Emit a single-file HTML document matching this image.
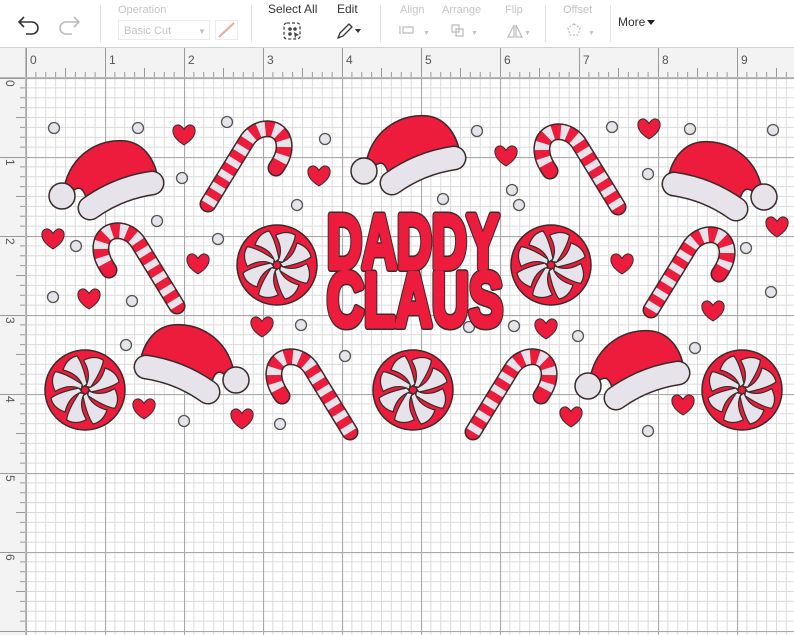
<!DOCTYPE html>
<html><head><meta charset="utf-8"><style>
html,body{margin:0;padding:0;width:794px;height:635px;overflow:hidden;background:#fff;font-family:"Liberation Sans",sans-serif}
</style></head><body>
<svg width="794" height="635" viewBox="0 0 794 635" xmlns="http://www.w3.org/2000/svg" style="position:absolute;left:0;top:0">
<defs>
<pattern id="grid" x="26" y="78" width="79" height="79" patternUnits="userSpaceOnUse">
<rect width="79" height="79" fill="#fff"/>
<g stroke="#dcdcdc" stroke-width="1">
<path d="M9.875,0V79M19.75,0V79M29.625,0V79M39.5,0V79M49.375,0V79M59.25,0V79M69.125,0V79"/>
<path d="M0,9.875H79M0,19.75H79M0,29.625H79M0,39.5H79M0,49.375H79M0,59.25H79M0,69.125H79"/>
</g>
<path d="M0.5,0V79M0,0.5H79" stroke="#a9a9a9" stroke-width="1.2"/>
</pattern>
<pattern id="tick" x="26" y="48" width="79" height="30" patternUnits="userSpaceOnUse">
<path d="M0.5,0V30M9.875,24V30M19.75,24V30M29.625,24V30M39.5,20V30M49.375,24V30M59.25,24V30M69.125,24V30" stroke="#999" stroke-width="1"/>
</pattern>
<pattern id="vtick" x="0" y="78" width="26" height="79" patternUnits="userSpaceOnUse">
<path d="M0,0.5H26M20,9.875H26M20,19.75H26M20,29.625H26M16,39.5H26M20,49.375H26M20,59.25H26M20,69.125H26" stroke="#999" stroke-width="1"/>
</pattern>
<symbol id="hat" overflow="visible">
<path d="M18,50 C25,15 55,0 80,3 C100,6 110,25 112,42 L42,68 C40,56 36,46 28,52 Z" fill="#ee1c3c" stroke="#3a2a2a" stroke-width="1.5"/>
<path d="M44,70 Q72,50 106,45" fill="none" stroke="#3a2a2a" stroke-width="25" stroke-linecap="round"/>
<path d="M44,70 Q72,50 106,45" fill="none" stroke="#e6e4ea" stroke-width="22" stroke-linecap="round"/>
<circle cx="16" cy="58" r="13" fill="#e6e4ea" stroke="#3a2a2a" stroke-width="1.5"/>
</symbol>
<symbol id="cane" overflow="visible">
<path d="M8,82 L46,20 C56,2 82,2 84,22 C85,32 80,40 76,46" fill="none" stroke="#3a2a2a" stroke-width="17" stroke-linecap="round"/>
<path d="M8,82 L46,20 C56,2 82,2 84,22 C85,32 80,40 76,46" fill="none" stroke="#ee1c3c" stroke-width="14" stroke-linecap="round"/>
<path d="M8,82 L46,20 C56,2 82,2 84,22 C85,32 80,40 76,46" fill="none" stroke="#e6e4ea" stroke-width="14" stroke-dasharray="7 8"/>
</symbol>
<g id="blade"><path d="M3,-2 Q16,-6 20,-22 Q32,-18 34,-8 Q26,-2 6,2 Z" fill="#e6e4ea" stroke="#3a2a2a" stroke-width="1.2"/></g>
<symbol id="mint" overflow="visible">
<circle r="40" fill="#ee1c3c" stroke="#3a2a2a" stroke-width="1.5"/>
<use href="#blade"/><use href="#blade" transform="rotate(45)"/><use href="#blade" transform="rotate(90)"/><use href="#blade" transform="rotate(135)"/><use href="#blade" transform="rotate(180)"/><use href="#blade" transform="rotate(225)"/><use href="#blade" transform="rotate(270)"/><use href="#blade" transform="rotate(315)"/>
</symbol>
<symbol id="heart" overflow="visible">
<path d="M0,8 C-16,-2 -12,-13 -5,-12 C-2,-11 0,-8 0,-7 C0,-8 2,-11 5,-12 C12,-13 16,-2 0,8 Z" fill="#ee1c3c" stroke="#3a2a2a" stroke-width="1"/>
</symbol>
</defs>

<rect x="0" y="0" width="794" height="48" fill="#fff"/>
<path d="M20,22 h12 a6,6 0 0 1 0,12 h-6 M24,17 l-5,5 l5,5" fill="none" stroke="#333" stroke-width="1.6"/>
<path d="M78,22 h-12 a6,6 0 0 0 0,12 h6 M74,17 l5,5 l-5,5" fill="none" stroke="#bbb" stroke-width="1.6"/>
<g stroke="#e4e4e4"><path d="M100.5,5V42M251.5,5V42M380.5,5V42M545.5,5V42M610.5,5V42"/></g>
<g font-size="11" fill="#c4c4c4">
<text x="118" y="13">Operation</text>
<rect x="118.5" y="20.5" width="91" height="19" fill="#fff" stroke="#ececec"/>
<text x="124" y="34">Basic Cut</text><text x="198" y="34" font-size="8">▼</text>
<rect x="215.5" y="20.5" width="22" height="19" fill="#fff" stroke="#ececec"/>
<text x="400" y="13">Align</text><text x="442" y="13">Arrange</text><text x="505" y="13">Flip</text><text x="563" y="13">Offset</text>
<text x="423" y="35" font-size="7">▼</text><text x="471" y="35" font-size="7">▼</text><text x="524" y="35" font-size="7">▼</text><text x="588" y="35" font-size="7">▼</text>
</g>
<path d="M219,37 L234,23" stroke="#f0a898" stroke-width="2.2"/>
<g fill="none" stroke="#bbb" stroke-width="1.2">
<path d="M400,26v8M403,27h10v6h-10z"/>
<path d="M452,25h7v7h-7zM456,29h7v7h-7z"/>
<path d="M514,37l-6,0l6-12zM516,37l6,0l-6-12z"/>
<path d="M574,24l6,4l-2,7h-8l-2-7z" stroke-dasharray="2 1.5"/>
</g>
<g font-size="12" fill="#333"><text x="268" y="13">Select All</text><text x="337" y="13">Edit</text><text x="618" y="26">More</text></g>
<path d="M647,20h8l-4,5z" fill="#222"/>
<rect x="284" y="23" width="16" height="16" rx="3" fill="none" stroke="#444" stroke-dasharray="3 2" stroke-width="1.3"/>
<g fill="#444"><circle cx="290" cy="29" r="1.8"/><circle cx="295" cy="29" r="1.8"/><circle cx="290" cy="34" r="1.8"/></g>
<path d="M294,32l5,3l-3,1l-1,3z" fill="#444"/>
<path d="M338,38l2,-5l9,-9l3,3l-9,9z" fill="none" stroke="#333" stroke-width="1.3"/>
<path d="M355,29h6l-3,4z" fill="#333"/>
<line x1="0" y1="47.5" x2="794" y2="47.5" stroke="#d0d0d0"/>

<rect x="0" y="48" width="794" height="30" fill="#f3f3f3"/>
<rect x="0" y="48" width="26" height="587" fill="#f3f3f3"/>
<rect x="26" y="48" width="768" height="30" fill="url(#tick)"/>
<rect x="0" y="78" width="26" height="557" fill="url(#vtick)"/>
<line x1="0" y1="77.5" x2="794" y2="77.5" stroke="#bbb"/>
<line x1="25.5" y1="48" x2="25.5" y2="635" stroke="#bbb"/>
<g font-size="12" fill="#555">
<text x="30" y="64">0</text><text x="109" y="64">1</text><text x="188" y="64">2</text><text x="267" y="64">3</text><text x="346" y="64">4</text><text x="425" y="64">5</text><text x="504" y="64">6</text><text x="583" y="64">7</text><text x="662" y="64">8</text><text x="741" y="64">9</text>
<text transform="translate(6,80) rotate(90)">0</text><text transform="translate(6,159) rotate(90)">1</text><text transform="translate(6,238) rotate(90)">2</text><text transform="translate(6,317) rotate(90)">3</text><text transform="translate(6,396) rotate(90)">4</text><text transform="translate(6,475) rotate(90)">5</text><text transform="translate(6,554) rotate(90)">6</text>
</g>

<rect x="26" y="78" width="768" height="557" fill="url(#grid)"/>

<g fill="#e6e4ea" stroke="#555" stroke-width="1.3">
<circle cx="54" cy="128" r="5.5"/><circle cx="138" cy="128" r="5.5"/><circle cx="227" cy="122" r="5.5"/><circle cx="182" cy="178" r="5.5"/><circle cx="325" cy="139" r="5.5"/><circle cx="477" cy="131" r="5.5"/><circle cx="612" cy="127" r="5.5"/><circle cx="690" cy="129" r="5.5"/><circle cx="773" cy="130" r="5.5"/>
<circle cx="218" cy="239" r="5.5"/><circle cx="157" cy="221" r="5.5"/><circle cx="76" cy="246" r="5.5"/><circle cx="53" cy="297" r="5.5"/><circle cx="132" cy="301" r="5.5"/><circle cx="297" cy="205" r="5.5"/><circle cx="443" cy="199" r="5.5"/><circle cx="512" cy="190" r="5.5"/><circle cx="648" cy="174" r="5.5"/><circle cx="746" cy="248" r="5.5"/><circle cx="771" cy="292" r="5.5"/><circle cx="519" cy="205" r="5.5"/>
<circle cx="301" cy="325" r="5.5"/><circle cx="126" cy="345" r="5.5"/><circle cx="345" cy="356" r="5.5"/><circle cx="514" cy="326" r="5.5"/><circle cx="578" cy="336" r="5.5"/><circle cx="695" cy="348" r="5.5"/><circle cx="184" cy="421" r="5.5"/><circle cx="280" cy="424" r="5.5"/><circle cx="648" cy="431" r="5.5"/><circle cx="469" cy="327" r="5.5"/>
</g>

<use href="#heart" x="184" y="137"/><use href="#heart" x="319" y="178"/><use href="#heart" x="506" y="158"/><use href="#heart" x="649" y="131"/><use href="#heart" x="53" y="241"/><use href="#heart" x="198" y="266"/><use href="#heart" x="622" y="266"/><use href="#heart" x="777" y="229"/><use href="#heart" x="89" y="301"/><use href="#heart" x="262" y="329"/><use href="#heart" x="546" y="331"/><use href="#heart" x="713" y="313"/><use href="#heart" x="144" y="411"/><use href="#heart" x="242" y="421"/><use href="#heart" x="571" y="419"/><use href="#heart" x="683" y="407"/>

<use href="#hat" transform="translate(46,138)"/>
<use href="#hat" transform="translate(348,113)"/>
<use href="#hat" transform="translate(780,139) scale(-1,1)"/>
<use href="#hat" transform="translate(252,322) scale(-1,1)"/>
<use href="#hat" transform="translate(572,328)"/>

<use href="#cane" transform="translate(200,122)"/>
<use href="#cane" transform="translate(185,224) scale(-1,1)"/>
<use href="#cane" transform="translate(626,125) scale(-1,1)"/>
<use href="#cane" transform="translate(643,228)"/>
<use href="#cane" transform="translate(358,350) scale(-1,1)"/>
<use href="#cane" transform="translate(465,350)"/>

<use href="#mint" x="277" y="265"/><use href="#mint" x="551" y="265"/><use href="#mint" x="85" y="390"/><use href="#mint" x="413" y="390"/><use href="#mint" x="742" y="390"/>

<g font-family="Liberation Sans,sans-serif" font-weight="bold" font-size="76" stroke-linejoin="round">
<g fill="#3a2a2a" stroke="#3a2a2a" stroke-width="8">
<text x="327" y="268" textLength="172" lengthAdjust="spacingAndGlyphs">DADDY</text>
<text x="327" y="326" textLength="176" lengthAdjust="spacingAndGlyphs">CLAUS</text>
</g>
<g fill="#ee1c3c" stroke="#ee1c3c" stroke-width="5">
<text x="327" y="268" textLength="172" lengthAdjust="spacingAndGlyphs">DADDY</text>
<text x="327" y="326" textLength="176" lengthAdjust="spacingAndGlyphs">CLAUS</text>
</g>
</g>
</svg>
</body></html>
